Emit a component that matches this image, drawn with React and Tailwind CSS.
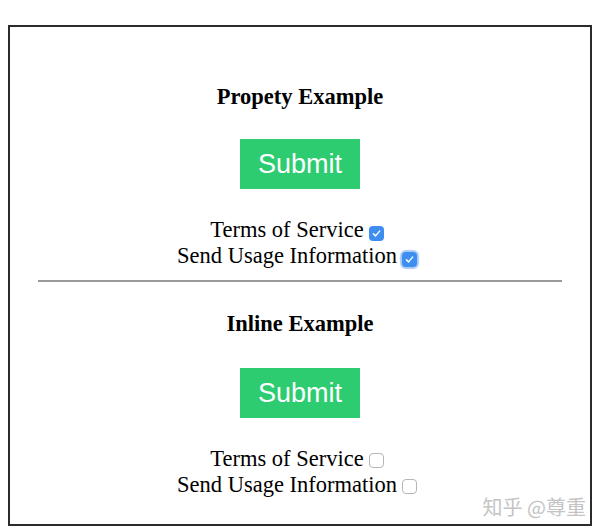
import React from 'react';

const Box = ({ checked, focused }) => {
  if (!checked) {
    return (
      <span className="ml-[5px] inline-block h-[15px] w-[15px] rounded-[4px] border border-[#b5b5b5] bg-white align-[-2px]" />
    );
  }
  return (
    <span
      className={
        'ml-[5px] inline-flex h-[15px] w-[15px] items-center justify-center rounded-[4px] bg-[#3d8ef0] align-[-2px] ' +
        (focused ? 'shadow-[0_0_1px_2px_#a9cbf6]' : '')
      }
    >
      <svg viewBox="0 0 12 12" className="h-[11px] w-[11px]" fill="none" stroke="white" strokeWidth="1.6" strokeLinecap="round" strokeLinejoin="round">
        <path d="M2.6 6.3 L5 8.6 L9.4 3.4" />
      </svg>
    </span>
  );
};

const Section = ({ title, checked, top, gap }) => (
  <section className={'flex flex-col items-center ' + top}>
    <h2 className="text-[22.5px] font-bold leading-[24px] text-black">{title}</h2>
    <button className={gap + " h-[50px] w-[120px] bg-[#2ecc71] font-['Liberation_Sans',Arial,sans-serif] text-[27px] text-white"}>
      Submit
    </button>
    <div className="mt-[28px] flex flex-col items-center pr-[6px] text-[22.5px] leading-[26px] text-black">
      <label>
        Terms of Service
        <Box checked={checked} />
      </label>
      <label>
        Send Usage Information
        <Box checked={checked} focused />
      </label>
    </div>
  </section>
);

export default function App() {
  return (
    <div className="relative h-[531px] w-[600px] bg-white font-['Liberation_Serif','Times_New_Roman',serif]">
      <div className="absolute left-[8px] top-[25px] h-[501px] w-[584px] border-2 border-[#2b2b2b]">
        <Section title="Propety Example" checked top="pt-[58px]" gap="mt-[30px]" />
        <hr className="mx-[28px] mt-[11px] border-t-2 border-[#9a9a9a]" />
        <Section title="Inline Example" checked={false} top="pt-[30px]" gap="mt-[32px]" />
      </div>
      <span className="absolute right-[14px] top-[492px] font-['Noto_Sans_CJK_SC',sans-serif] text-[20px] text-[#c4c4c4]">
        知乎 @尊重
      </span>
    </div>
  );
}
